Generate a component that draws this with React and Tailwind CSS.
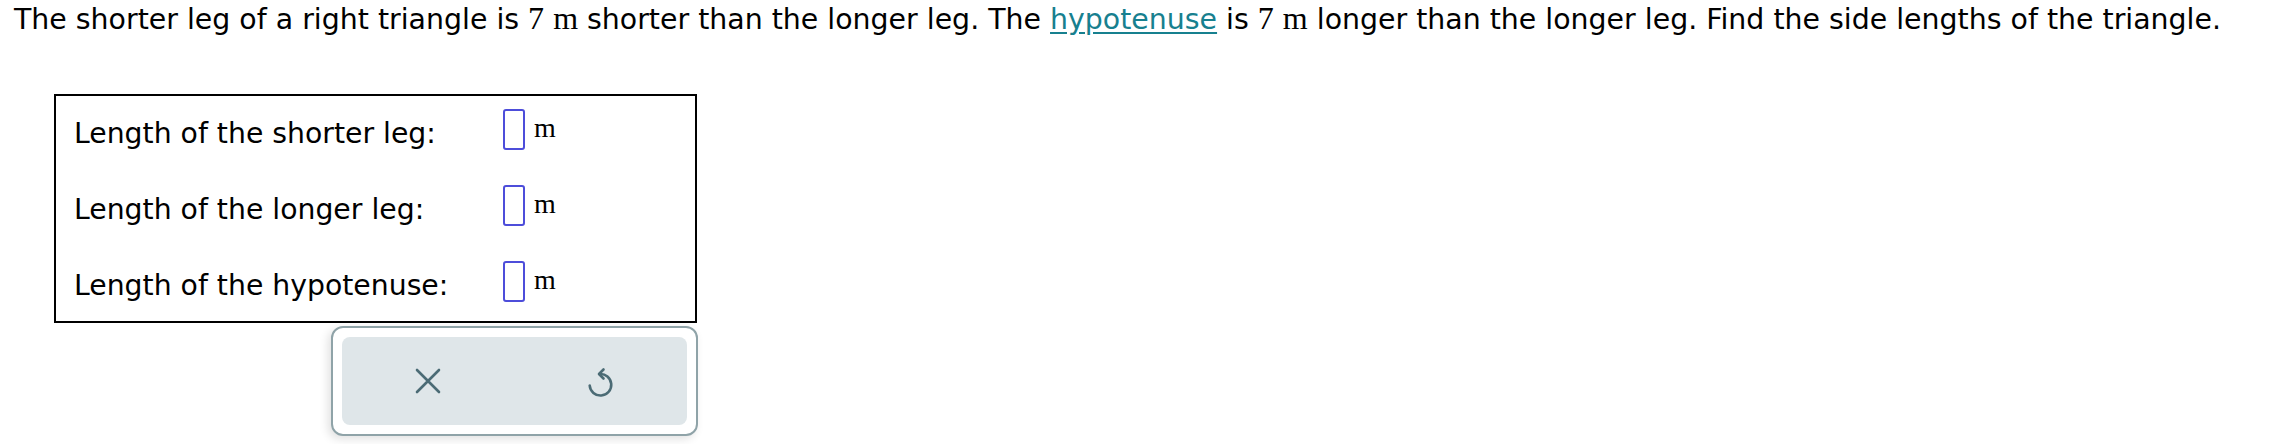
import { useState } from 'react'

const sans = { fontFamily: '"DejaVu Sans", Verdana, sans-serif' }
const serif = { fontFamily: '"Liberation Serif", "Times New Roman", serif' }

function M({ children }) {
  return (
    <span className="text-[32px]" style={serif}>
      {children}
    </span>
  )
}

function Row({ label }) {
  const [val, setVal] = useState('')
  return (
    <div className="flex items-center h-[41px]">
      <div className="w-[429px] mt-[9px] text-[28.3px] text-black">{label}</div>
      <input
        value={val}
        onChange={(e) => setVal(e.target.value)}
        className="w-[22px] h-[41px] border-2 border-[#4d4dda] rounded-[3px] outline-none"
      />
      <span className="ml-[9px] -mt-[4px] text-[28px] text-black" style={serif}>m</span>
    </div>
  )
}

function XIcon() {
  return (
    <svg width="26" height="26" viewBox="0 0 26 26" fill="none" stroke="#4b6b75" strokeWidth="2.6" strokeLinecap="round">
      <path d="M2 2L24 24M24 2L2 24" />
    </svg>
  )
}

function ResetIcon() {
  return (
    <svg width="27" height="34" viewBox="0 0 27 34" fill="none" stroke="#4b6b75" strokeWidth="2.6" strokeLinecap="round" strokeLinejoin="round">
      <path d="M12.5 10A10.8 10.8 0 1 1 2.7 21.5" />
      <path d="M16.5 5.5L12 10L16.5 14.5" />
    </svg>
  )
}

export default function App() {
  return (
    <div className="w-[2276px] h-[444px] bg-white pl-[14px] pt-[2px] overflow-hidden" style={sans}>
      {/* Question */}
      <p className="text-[28.4px] leading-[33px] text-black whitespace-nowrap">
        The shorter leg of a right triangle is <M>7</M> <M>m</M> shorter than the longer leg. The{' '}
        <span className="text-[#17808f] underline underline-offset-[3px]">hypotenuse</span> is <M>7</M> <M>m</M> longer
        than the longer leg. Find the side lengths of the triangle.
      </p>

      {/* Answer box */}
      <div className="mt-[58px] ml-[40px] w-[643px] h-[229px] border-2 border-black pl-[18px] pt-[13px] flex flex-col gap-[35px]">
        <Row label="Length of the shorter leg:" />
        <Row label="Length of the longer leg:" />
        <Row label="Length of the hypotenuse:" />
      </div>

      {/* Buttons */}
      <div className="mt-[3px] ml-[317px] w-[367px] h-[110px] border-2 border-[#8fa3a8] rounded-[12px] bg-white p-[9px] shadow-[-3px_3px_10px_rgba(0,0,0,0.12)]">
        <div className="flex h-full bg-[#dfe6e9] rounded-[8px]">
          <button className="flex-1 flex items-center justify-center">
            <XIcon />
          </button>
          <button className="flex-1 flex items-center justify-center">
            <ResetIcon />
          </button>
        </div>
      </div>
    </div>
  )
}
